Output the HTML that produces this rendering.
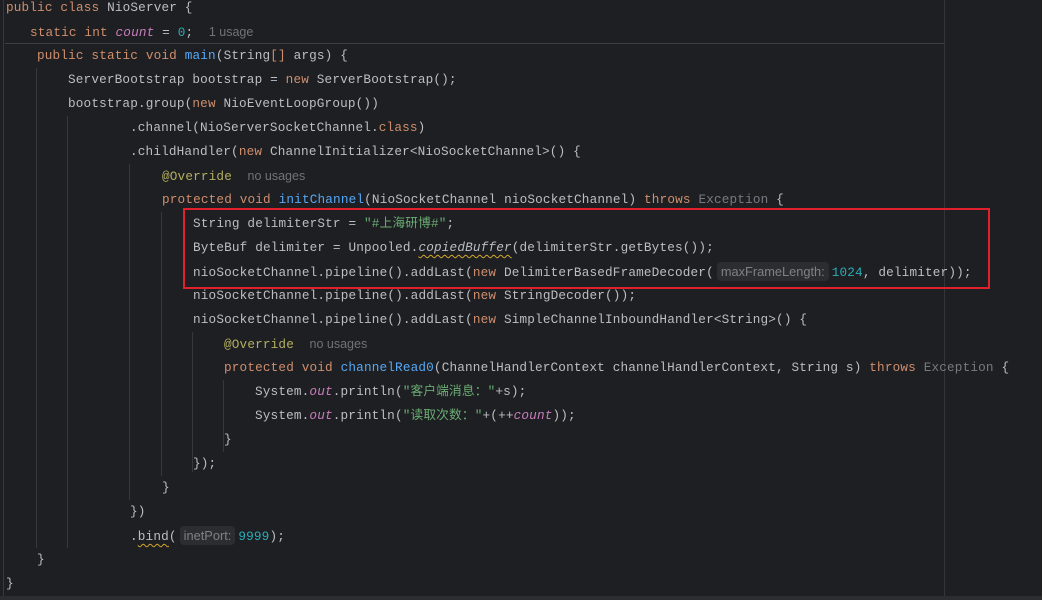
<!DOCTYPE html>
<html><head><meta charset="utf-8"><style>
body{margin:0;width:1042px;height:600px;background:#1e1f22;overflow:hidden;position:relative;font-family:"Liberation Mono","Noto Sans CJK SC",monospace;font-size:12.7px;letter-spacing:0.16px;color:#bcbec4}
.l{position:absolute;height:24px;line-height:24px;white-space:pre}
.k{color:#cf8e6d}.m{color:#56a8f5}.n{color:#2aacb8}.s{color:#6aab73}.a{color:#b3ae60}.f{color:#c77dbb;font-style:italic}.x{color:#767a80}.it{font-style:italic}
.h{font-family:"Liberation Sans",sans-serif;font-size:12.5px;letter-spacing:0;color:#6f737a}
.hb{font-family:"Liberation Sans",sans-serif;font-size:12.8px;letter-spacing:0;color:#7e8187;background:#2b2d30;border-radius:4px;padding:2px 4px;margin:0 3px}
.w{text-decoration:underline wavy #d4a72c;text-decoration-thickness:1px;text-underline-offset:3px}
.g{position:absolute;width:1px;background:#36383d}
</style></head><body>
<div class="g" style="left:3px;top:0;height:600px"></div>
<div class="g" style="left:944px;top:0;height:600px;background:#33353a"></div>
<div style="position:absolute;left:5px;top:43px;width:939px;height:1px;background:#3c3e43"></div>
<div class="g" style="left:36px;top:68px;height:480px"></div>
<div class="g" style="left:67px;top:116px;height:432px"></div>
<div class="g" style="left:129px;top:164px;height:336px"></div>
<div class="g" style="left:161px;top:212px;height:264px"></div>
<div class="g" style="left:192px;top:332px;height:140px"></div>
<div class="g" style="left:223px;top:380px;height:72px"></div>
<div style="position:absolute;left:0;top:596px;width:1042px;height:4px;background:#2b2d30"></div>

<div class="l" style="left:6px;top:-4px"><span class="k">public class</span> NioServer {</div>
<div class="l" style="left:30px;top:20px"><span class="k">static int</span> <span class="f">count</span> = <span class="n">0</span>;  <span class="h">1 usage</span></div>
<div class="l" style="left:37px;top:44px"><span class="k">public static void</span> <span class="m">main</span>(String<span class="k">[]</span> args) {</div>
<div class="l" style="left:68px;top:68px">ServerBootstrap bootstrap = <span class="k">new</span> ServerBootstrap();</div>
<div class="l" style="left:68px;top:92px">bootstrap.group(<span class="k">new</span> NioEventLoopGroup())</div>
<div class="l" style="left:130px;top:116px">.channel(NioServerSocketChannel.<span class="k">class</span>)</div>
<div class="l" style="left:130px;top:140px">.childHandler(<span class="k">new</span> ChannelInitializer&lt;NioSocketChannel&gt;() {</div>
<div class="l" style="left:162px;top:164px"><span class="a">@Override</span>  <span class="h">no usages</span></div>
<div class="l" style="left:162px;top:188px"><span class="k">protected void</span> <span class="m">initChannel</span>(NioSocketChannel nioSocketChannel) <span class="k">throws</span> <span class="x">Exception</span> {</div>
<div class="l" style="left:193px;top:212px">String delimiterStr = <span class="s">"#上海研博#"</span>;</div>
<div class="l" style="left:193px;top:236px">ByteBuf delimiter = Unpooled.<span class="it w">copiedBuffer</span>(delimiterStr.getBytes());</div>
<div class="l" style="left:193px;top:260px">nioSocketChannel.pipeline().addLast(<span class="k">new</span> DelimiterBasedFrameDecoder(<span class="hb">maxFrameLength:</span><span class="n">1024</span>, delimiter));</div>
<div class="l" style="left:193px;top:284px">nioSocketChannel.pipeline().addLast(<span class="k">new</span> StringDecoder());</div>
<div class="l" style="left:193px;top:308px">nioSocketChannel.pipeline().addLast(<span class="k">new</span> SimpleChannelInboundHandler&lt;String&gt;() {</div>
<div class="l" style="left:224px;top:332px"><span class="a">@Override</span>  <span class="h">no usages</span></div>
<div class="l" style="left:224px;top:356px"><span class="k">protected void</span> <span class="m">channelRead0</span>(ChannelHandlerContext channelHandlerContext, String s) <span class="k">throws</span> <span class="x">Exception</span> {</div>
<div class="l" style="left:255px;top:380px">System.<span class="f">out</span>.println(<span class="s">"客户端消息："</span>+s);</div>
<div class="l" style="left:255px;top:404px">System.<span class="f">out</span>.println(<span class="s">"读取次数："</span>+(++<span class="f">count</span>));</div>
<div class="l" style="left:224px;top:428px">}</div>
<div class="l" style="left:193px;top:452px">});</div>
<div class="l" style="left:162px;top:476px">}</div>
<div class="l" style="left:130px;top:500px">})</div>
<div class="l" style="left:130px;top:524px">.<span class="w">bind</span>(<span class="hb">inetPort:</span><span class="n">9999</span>);</div>
<div class="l" style="left:37px;top:548px">}</div>
<div class="l" style="left:6px;top:572px">}</div>

<div style="position:absolute;left:183px;top:208px;width:803px;height:77px;border:2px solid #e0202a"></div>
</body></html>
